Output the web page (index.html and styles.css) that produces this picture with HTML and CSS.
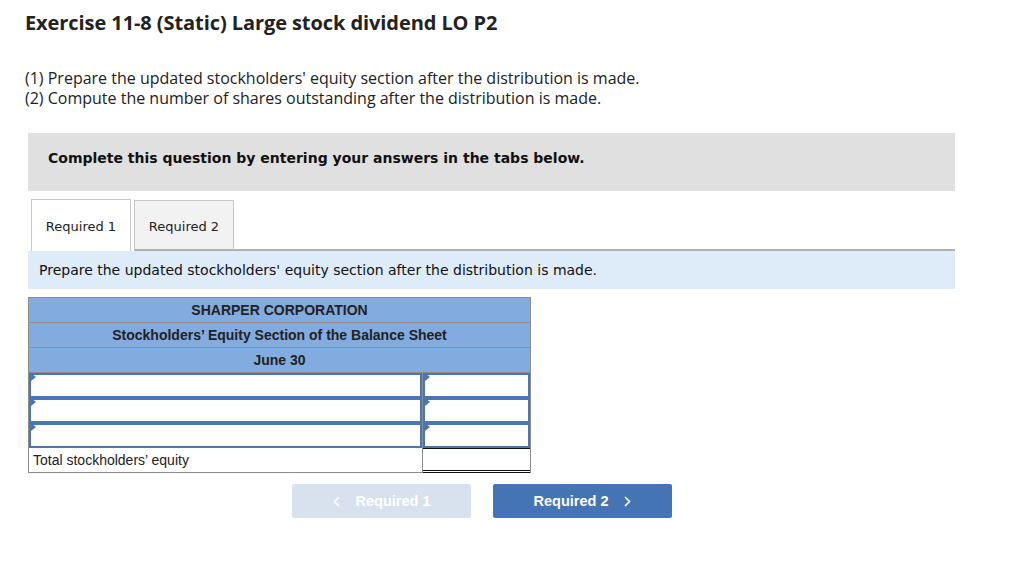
FILE: index.html
```html
<!DOCTYPE html>
<html lang="en">
<head>
    <meta charset="UTF-8">
    <meta name="viewport" content="width=device-width, initial-scale=1.0">
    <title>Exercise 11-8</title>

    <link rel="stylesheet" href="styles.css">
</head>
<body>

    <div class="page">
        <h1 class="title">Exercise 11-8 (Static) Large stock dividend LO P2</h1>

        <div class="intro">
            <p>(1) Prepare the updated stockholders' equity section after the distribution is made.</p>
            <p>(2) Compute the number of shares outstanding after the distribution is made.</p>
        </div>

        <div class="task">
            <div class="notice">
                <p>Complete this question by entering your answers in the tabs below.</p>
            </div>

            <div class="tabs">
                <button class="tab active">Required 1</button>
                <button class="tab">Required 2</button>
                <div class="tab-rest"></div>
            </div>

            <div class="instruction">
                <p>Prepare the updated stockholders' equity section after the distribution is made.</p>
            </div>

            <div class="sheet">
                <div class="sheet-head">SHARPER CORPORATION</div>
                <div class="sheet-head">Stockholders’ Equity Section of the Balance Sheet</div>
                <div class="sheet-head">June 30</div>

                <div class="entry-row">
                    <div class="entry label"></div>
                    <div class="entry amount"></div>
                </div>
                <div class="entry-row">
                    <div class="entry label"></div>
                    <div class="entry amount"></div>
                </div>
                <div class="entry-row">
                    <div class="entry label"></div>
                    <div class="entry amount"></div>
                </div>

                <div class="total-row">
                    <div class="total-label">Total stockholders’ equity</div>
                    <div class="total-amount"></div>
                </div>
            </div>

            <div class="nav">
                <button class="nav-btn prev">
                    <svg class="chev" width="7" height="11" viewBox="0 0 7 11"><polyline points="6,1 1.5,5.5 6,10" fill="none" stroke="white" stroke-width="1.6"/></svg>
                    <span>Required 1</span>
                </button>
                <button class="nav-btn next">
                    <span>Required 2</span>
                    <svg class="chev" width="7" height="11" viewBox="0 0 7 11"><polyline points="1,1 5.5,5.5 1,10" fill="none" stroke="white" stroke-width="1.6"/></svg>
                </button>
            </div>
        </div>
    </div>

</body>
</html>
```

FILE: styles.css
```css
* {
    margin: 0;
    padding: 0;
    box-sizing: border-box;
}

body {
    background-color: white;
    color: #222;
    font-family: "Open Sans", "Liberation Sans", Arial, sans-serif;
}

.page {
    padding: 10px 0 0 25px;
}

.title {
    font-size: 20px;
    line-height: 26px;
    font-weight: bold;
    color: #222;
    letter-spacing: -0.08px;
}

.intro {
    margin-top: 32px;
    font-size: 16px;
    line-height: 20px;
    color: #222;
}

.task {
    margin-top: 25px;
    margin-left: 3px;
    width: 927px;
}

.notice {
    background-color: #e0e0e0;
    height: 58px;
    padding: 16px 0 0 20px;
    font-family: "DejaVu Sans", Verdana, sans-serif;
    font-size: 14px;
    line-height: 18px;
    font-weight: bold;
    color: #111;
}

.tabs {
    display: flex;
    align-items: flex-end;
    margin-top: 8px;
    height: 52px;
}

.tab {
    width: 100px;
    height: 51px;
    margin-left: 3px;
    border: 1px solid #c8c8c8;
    border-bottom: 2px solid #b0b0b0;
    background-color: #f2f2f2;
    font-family: "DejaVu Sans", Verdana, sans-serif;
    font-size: 13px;
    color: #222;
    padding-top: 2px;
}

.tab.active {
    height: 52px;
    background-color: white;
    border-bottom: none;
}

.tab-rest {
    flex: 1;
    border-bottom: 2px solid #b0b0b0;
}

.instruction {
    background-color: #deebf8;
    height: 38px;
    display: flex;
    align-items: center;
    padding-left: 11px;
    font-family: "DejaVu Sans", Verdana, sans-serif;
    font-size: 14px;
    color: #111;
}

.sheet {
    margin-top: 8px;
    width: 503px;
    border: 1px solid #8c8c8c;
    border-bottom: none;
    font-family: "Liberation Sans", Arial, sans-serif;
    font-size: 14px;
}

.sheet-head {
    height: 25px;
    line-height: 24px;
    background-color: #82abdf;
    border-bottom: 1px solid #8c8c8c;
    text-align: center;
    font-weight: bold;
    color: #222;
}

.entry-row {
    display: flex;
    height: 25px;
    gap: 1px;
    background-color: #8c8c8c;
}

.entry {
    position: relative;
    background-color: white;
    border: 2px solid #4a76b2;
}

.entry::before {
    content: "";
    position: absolute;
    top: 0;
    left: 0;
    border-top: 4px solid transparent;
    border-bottom: 4px solid transparent;
    border-left: 5px solid #4a76b2;
    margin-top: -2px;
}

.entry.label {
    width: 393px;
}

.entry.amount {
    flex: 1;
}

.total-row {
    display: flex;
    height: 25px;
    border-bottom: 1px solid #8c8c8c;
}

.total-label {
    width: 394px;
    border-right: 1px solid #8c8c8c;
    padding-left: 4px;
    line-height: 25px;
    color: #222;
}

.total-amount {
    flex: 1;
    border-top: 1px solid #111;
    border-bottom: 3px double #111;
    margin-bottom: -1px;
}

.nav {
    display: flex;
    gap: 22px;
    margin-top: 11px;
    padding-left: 264px;
}

.nav-btn {
    width: 179px;
    height: 34px;
    border: none;
    border-radius: 2px;
    color: white;
    font-family: "Liberation Sans", Arial, sans-serif;
    font-size: 14.5px;
    font-weight: bold;
    display: flex;
    align-items: center;
    justify-content: center;
    gap: 16px;
}

.nav-btn.prev {
    background-color: #d8e2ef;
}

.nav-btn.next {
    background-color: #4574b4;
}

.chev {
    display: block;
}
```
